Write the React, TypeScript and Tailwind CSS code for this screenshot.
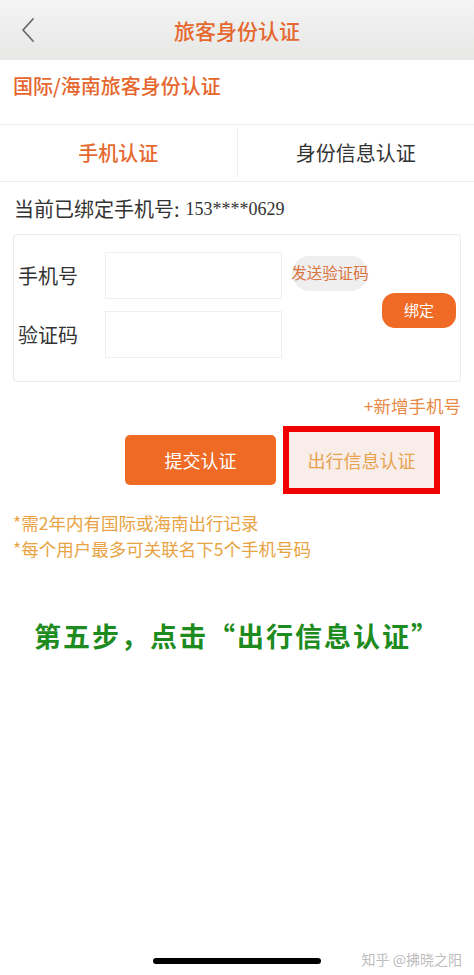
import React from "react";

const cjk = { fontFamily: '"Noto Sans CJK SC", "Noto Sans", sans-serif' };

export default function App() {
  return (
    <div className="w-[474px] h-[975px] bg-white flex flex-col overflow-hidden" style={cjk}>
      {/* header */}
      <div className="h-[60px] shrink-0 grid grid-cols-[60px_1fr_60px] items-center bg-gradient-to-b from-[#f4f4f4] to-[#e7e7e6]">
        <div className="pl-[20px] flex items-center">
          <svg width="16" height="26" viewBox="0 0 16 26" fill="none">
            <path d="M13 2 L3 13 L13 24" stroke="#6a6a6a" strokeWidth="1.8" strokeLinecap="round" strokeLinejoin="round" />
          </svg>
        </div>
        <div className="text-center text-[21px] font-medium text-[#e5682f] pt-[2px]">旅客身份认证</div>
        <div />
      </div>

      {/* subtitle */}
      <div className="h-[64px] shrink-0 flex items-center pl-[13px] pb-[12px] text-[20px] font-medium text-[#e5672e]">
        国际/海南旅客身份认证
      </div>

      {/* tabs */}
      <div className="h-[58px] shrink-0 flex border-t border-b border-[#ececec]">
        <div className="flex-1 flex items-center justify-center text-[20px] font-medium text-[#e5692f]">手机认证</div>
        <div className="w-px my-[4px] bg-[#ececec]" />
        <div className="flex-1 flex items-center justify-center text-[20px] text-[#333]">身份信息认证</div>
      </div>

      {/* bound phone */}
      <div className="h-[52px] shrink-0 flex items-center pl-[14px] pt-[2px] text-[20px] text-[#333]">
        当前已绑定手机号:
        <span className="ml-[6px] text-[18px]" style={{ fontFamily: '"Liberation Serif", serif' }}>153****0629</span>
      </div>

      {/* card */}
      <div className="mx-[13px] h-[148px] shrink-0 border border-[#ebebeb] rounded-[4px] flex items-center pl-[4px] pr-[4px]">
        <div className="flex flex-col gap-[12px] pb-[6px]">
          <div className="flex items-center">
            <div className="w-[87px] text-[20px] text-[#333]">手机号</div>
            <div className="w-[177px] h-[47px] border border-[#efefef]" />
            <div className="ml-[10px] w-[76px] h-[35px] rounded-full bg-[#efefef] flex items-center justify-center text-[15.5px] text-[#d9743e] whitespace-nowrap -mt-[5px]">
              发送验证码
            </div>
          </div>
          <div className="flex items-center">
            <div className="w-[87px] text-[20px] text-[#333]">验证码</div>
            <div className="w-[177px] h-[47px] border border-[#efefef]" />
          </div>
        </div>
        <div className="ml-[14px] mt-[4px] w-[76px] h-[35px] rounded-[13px] bg-[#ee6a25] text-white text-[15px] flex items-center justify-center">
          绑定
        </div>
      </div>

      {/* add phone */}
      <div className="h-[44px] shrink-0 flex items-center justify-end pr-[13px] pt-[4px] text-[17.5px] text-[#e88a46]">
        +新增手机号
      </div>

      {/* buttons */}
      <div className="h-[68px] shrink-0 flex items-center pl-[125px]">
        <div className="w-[151px] h-[50px] rounded-[5px] bg-[#ee6a25] text-white text-[18px] flex items-center justify-center">
          提交认证
        </div>
        <div className="ml-[7px] w-[157px] h-[68px] border-[6px] border-[#f00000] bg-[#f8ede8] flex items-center justify-center text-[18px] text-[#e8a24e]">
          出行信息认证
        </div>
      </div>

      {/* notes */}
      <div className="pl-[13px] pt-[16px] flex flex-col text-[17.5px] leading-[26px] text-[#e8a444]">
        <div>*需2年内有国际或海南出行记录</div>
        <div>*每个用户最多可关联名下5个手机号码</div>
      </div>

      {/* green step */}
      <div className="pt-[54px] text-center text-[27px] font-bold tracking-[2px] text-[#1d8b1d]">
        第五步，点击“出行信息认证”
      </div>

      <div className="flex-1" />

      {/* bottom */}
      <div className="h-[18px] shrink-0 flex items-start relative">
        <div className="ml-[153px] mt-[1px] w-[168px] h-[6px] rounded-full bg-black" />
        <div className="absolute right-[12px] top-[-8px] text-[14px] text-[#bdbdbd]">知乎 @拂晓之阳</div>
      </div>
    </div>
  );
}
